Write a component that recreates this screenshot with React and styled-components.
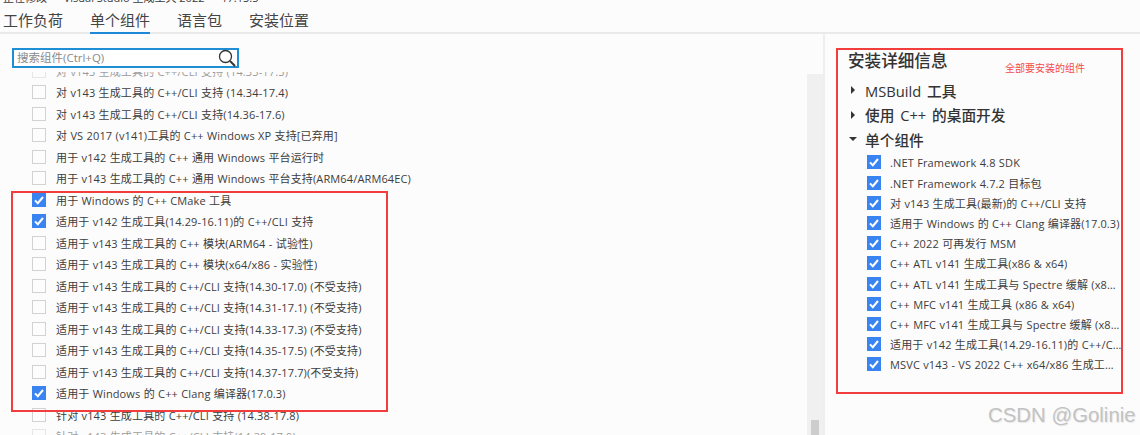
import React from 'react';
import styled, { createGlobalStyle } from 'styled-components';

const Global = createGlobalStyle`
	html, body {
		margin: 0;
		padding: 0;
		background: #fcfcfc;
		overflow: hidden;
	}
	body {
		font-family: "Open Sans", "Noto Sans CJK SC", sans-serif;
		color: #3c3c3c;
	}
`;

const Page = styled.div`
	position: relative;
	width: 1140px;
	height: 435px;
	overflow: hidden;
	display: flex;
	flex-direction: column;
	background: #fcfcfc;
`;

const TitleClip = styled.div`
	height: 4px;
	overflow: hidden;
`;

const TitleText = styled.div`
	margin-top: -10px;
	padding-left: 3px;
	font-size: 11px;
	line-height: 15px;
	white-space: nowrap;
`;

const TabBar = styled.div`
	height: 28px;
	display: flex;
	gap: 27px;
	padding-left: 3px;
	border-bottom: 2px solid #eaeaea;
`;

const Tab = styled.div`
	height: 30px;
	box-sizing: border-box;
	padding-top: 6px;
	font-size: 15px;
	line-height: 20px;
	letter-spacing: 0;
	color: #444;
	border-bottom: 2px solid ${(p) => (p.$active ? '#1e88d8' : 'transparent')};
`;

const Body = styled.div`
	flex: 1;
	display: flex;
	min-height: 0;
`;

const LeftPane = styled.div`
	width: 823px;
	display: flex;
	flex-direction: column;
	border-right: 2px solid #eeeeee;
`;

const SearchRow = styled.div`
	height: 38px;
	padding: 14px 0 0 12px;
	box-sizing: border-box;
`;

const SearchBox = styled.div`
	width: 227px;
	height: 20px;
	box-sizing: border-box;
	border: 2px solid #1e8fd5;
	background: #fff;
	display: flex;
	align-items: center;
	justify-content: space-between;
	padding: 0 1px 0 3px;
	font-size: 11.5px;
	color: #8a8a8a;
`;

const Placeholder = styled.span`
	padding-bottom: 2px;
`;

const ListArea = styled.div`
	flex: 1;
	display: flex;
	min-height: 0;
`;

const List = styled.div`
	flex: 1;
	overflow: hidden;
	padding-left: 32px;
`;

const ListInner = styled.div`
	margin-top: -12.25px;
`;

const Scrollbar = styled.div`
	width: 16px;
	margin-top: 2px;
	background: #f0f0f0;
	display: flex;
	justify-content: center;
	align-items: flex-end;
`;

const Thumb = styled.div`
	width: 8px;
	height: 15px;
	background: #cdcdcd;
`;

const Row = styled.div`
	height: ${(p) => p.$h}px;
	display: flex;
	align-items: center;
	gap: ${(p) => p.$gap}px;
	font-size: 11px;
	white-space: nowrap;
	opacity: ${(p) => (p.$faded ? 0.5 : 1)};
`;

const Label = styled.span`
	overflow: hidden;
	text-overflow: ellipsis;
	letter-spacing: 0.012em;
	word-spacing: 0.3px;
`;

const Box = styled.div`
	flex: none;
	width: 14px;
	height: 14px;
	box-sizing: border-box;
	border: ${(p) => (p.$on ? '0' : '1.5px solid #d2d2d2')};
	background: ${(p) => (p.$on ? '#3a84f2' : '#fdfdfd')};
	display: flex;
	align-items: center;
	justify-content: center;
`;

const RightPane = styled.div`
	flex: 1;
	min-width: 0;
	padding: 15px 18px 0 23px;
`;

const Heading = styled.div`
	font-size: 16.6px;
	line-height: 24px;
	font-weight: 500;
	color: #333;
	margin-bottom: 5px;
`;

const TreeHead = styled.div`
	height: 24.6px;
	display: flex;
	align-items: center;
	gap: 10px;
	font-size: 14.7px;
	font-weight: 500;
	word-spacing: 2px;
	color: #333;
`;

const Arrow = styled.span`
	width: 0;
	height: 0;
	flex: none;
	margin-left: 3px;
	${(p) =>
		p.$open
			? `border-left: 4px solid transparent;
		border-right: 4px solid transparent;
		border-top: 4px solid #333;
		margin-left: 1px;
		margin-right: -2px;`
			: `border-top: 4px solid transparent;
		border-bottom: 4px solid transparent;
		border-left: 4px solid #333;`}
`;

const SubList = styled.div`
	padding-left: 19px;
	margin-top: 0.5px;
`;

const RedBox = styled.div`
	position: absolute;
	box-sizing: border-box;
	border: 2px solid #f23d3d;
	left: ${(p) => p.$x}px;
	top: ${(p) => p.$y}px;
	width: ${(p) => p.$w}px;
	height: ${(p) => p.$h}px;
	pointer-events: none;
`;

const Note = styled.div`
	position: absolute;
	left: 1005px;
	top: 61px;
	font-size: 10px;
	line-height: 14px;
	color: #f54a4a;
`;

const Watermark = styled.div`
	position: absolute;
	left: 988px;
	top: 404px;
	font-family: "Liberation Sans", sans-serif;
	font-size: 20.4px;
	line-height: 23px;
	color: #c2c2c2;
	white-space: nowrap;
	text-shadow: 1px 1px 1px #e8e8e8;
`;

const Check = () => (
	<svg width="12" height="12" viewBox="0 0 12 12">
		<path d="M2 6.4 L4.8 9.2 L10 3" fill="none" stroke="#fff" strokeWidth="2" />
	</svg>
);

const SearchIcon = () => (
	<svg width="18" height="18" viewBox="0 0 18 18">
		<circle cx="7.5" cy="7.5" r="6" fill="none" stroke="#333" strokeWidth="1.3" />
		<path d="M12 12 L17 17" stroke="#333" strokeWidth="2" />
	</svg>
);

const leftRows = [
	{ t: '对 v143 生成工具的 C++/CLI 支持 (14.33-17.3)', faded: true },
	{ t: '对 v143 生成工具的 C++/CLI 支持 (14.34-17.4)' },
	{ t: '对 v143 生成工具的 C++/CLI 支持(14.36-17.6)' },
	{ t: '对 VS 2017 (v141)工具的 C++ Windows XP 支持[已弃用]' },
	{ t: '用于 v142 生成工具的 C++ 通用 Windows 平台运行时' },
	{ t: '用于 v143 生成工具的 C++ 通用 Windows 平台支持(ARM64/ARM64EC)' },
	{ t: '用于 Windows 的 C++ CMake 工具', on: true },
	{ t: '适用于 v142 生成工具(14.29-16.11)的 C++/CLI 支持', on: true },
	{ t: '适用于 v143 生成工具的 C++ 模块(ARM64 - 试验性)' },
	{ t: '适用于 v143 生成工具的 C++ 模块(x64/x86 - 实验性)' },
	{ t: '适用于 v143 生成工具的 C++/CLI 支持(14.30-17.0) (不受支持)' },
	{ t: '适用于 v143 生成工具的 C++/CLI 支持(14.31-17.1) (不受支持)' },
	{ t: '适用于 v143 生成工具的 C++/CLI 支持(14.33-17.3) (不受支持)' },
	{ t: '适用于 v143 生成工具的 C++/CLI 支持(14.35-17.5) (不受支持)' },
	{ t: '适用于 v143 生成工具的 C++/CLI 支持(14.37-17.7)(不受支持)' },
	{ t: '适用于 Windows 的 C++ Clang 编译器(17.0.3)', on: true },
	{ t: '针对 v143 生成工具的 C++/CLI 支持 (14.38-17.8)' },
	{ t: '针对 v143 生成工具的 C++/CLI 支持(14.39-17.9)', faded: true },
];

const rightRows = [
	'.NET Framework 4.8 SDK',
	'.NET Framework 4.7.2 目标包',
	'对 v143 生成工具(最新)的 C++/CLI 支持',
	'适用于 Windows 的 C++ Clang 编译器(17.0.3)',
	'C++ 2022 可再发行 MSM',
	'C++ ATL v141 生成工具(x86 & x64)',
	'C++ ATL v141 生成工具与 Spectre 缓解 (x86 & x64)',
	'C++ MFC v141 生成工具 (x86 & x64)',
	'C++ MFC v141 生成工具与 Spectre 缓解 (x86 & x64)',
	'适用于 v142 生成工具(14.29-16.11)的 C++/CLI 支持',
	'MSVC v143 - VS 2022 C++ x64/x86 生成工具(最新)',
];

export default function App() {
	return (
		<Page>
			<Global />
			<TitleClip>
				<TitleText>正在修改 — Visual Studio 生成工具 2022 — 17.13.5</TitleText>
			</TitleClip>
			<TabBar>
				<Tab>工作负荷</Tab>
				<Tab $active>单个组件</Tab>
				<Tab>语言包</Tab>
				<Tab>安装位置</Tab>
			</TabBar>
			<Body>
				<LeftPane>
					<SearchRow>
						<SearchBox>
							<Placeholder>搜索组件(Ctrl+Q)</Placeholder>
							<SearchIcon />
						</SearchBox>
					</SearchRow>
					<ListArea>
						<List>
							<ListInner>
								{leftRows.map((r) => (
									<Row key={r.t} $h={21.5} $gap={10} $faded={r.faded}>
										<Box $on={r.on}>{r.on && <Check />}</Box>
										<Label>{r.t}</Label>
									</Row>
								))}
							</ListInner>
						</List>
						<Scrollbar>
							<Thumb />
						</Scrollbar>
					</ListArea>
				</LeftPane>
				<RightPane>
					<Heading>安装详细信息</Heading>
					<TreeHead>
						<Arrow />
						MSBuild 工具
					</TreeHead>
					<TreeHead>
						<Arrow />
						使用 C++ 的桌面开发
					</TreeHead>
					<TreeHead>
						<Arrow $open />
						单个组件
					</TreeHead>
					<SubList>
						{rightRows.map((t) => (
							<Row key={t} $h={20.2} $gap={9}>
								<Box $on>
									<Check />
								</Box>
								<Label>{t}</Label>
							</Row>
						))}
					</SubList>
				</RightPane>
			</Body>
			<RedBox $x={11} $y={191} $w={377} $h={221} />
			<RedBox $x={836} $y={48} $w={287} $h={346} />
			<Note>全部要安装的组件</Note>
			<Watermark>CSDN @Golinie</Watermark>
		</Page>
	);
}
